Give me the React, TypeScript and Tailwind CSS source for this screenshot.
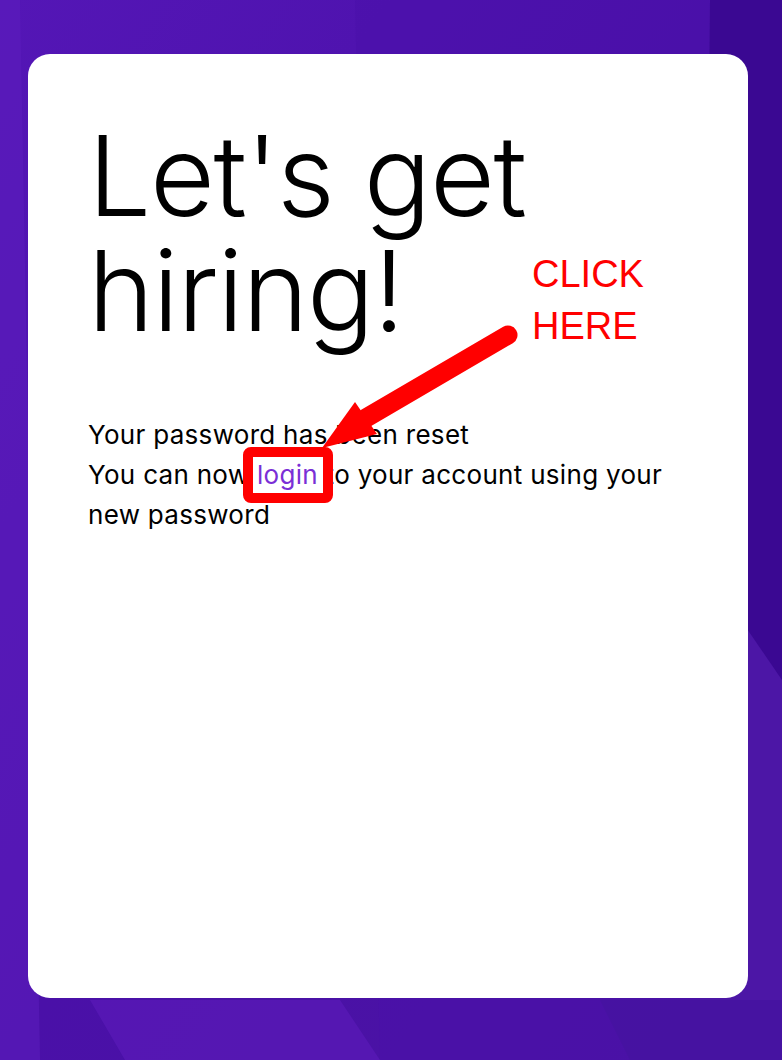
import React from "react";

export default function App() {
  return (
    <div className="relative w-[782px] h-[1060px] overflow-hidden bg-[#4c12a8]" style={{ fontFamily: "Inter, 'Noto Sans', sans-serif" }}>
      <svg className="absolute inset-0" width="782" height="1060" viewBox="0 0 782 1060">
        <defs>
          <linearGradient id="bg" x1="0" y1="0" x2="1" y2="1">
            <stop offset="0" stopColor="#5416b6" />
            <stop offset="0.5" stopColor="#4a10a8" />
            <stop offset="1" stopColor="#4a14a2" />
          </linearGradient>
        </defs>
        <rect width="782" height="1060" fill="url(#bg)" />
        <polygon points="0,0 20,0 40,1060 0,1060" fill="#5c1cbd" opacity="0.6" />
        <polygon points="355,0 710,0 700,1060 380,1060" fill="#4a10aa" opacity="0.5" />
        <polygon points="710,0 782,0 782,1060 700,1060" fill="#3a0892" />
        <polygon points="700,560 782,680 782,1060 700,1060" fill="#4c16a6" />
        <polygon points="90,1000 340,1000 380,1060 125,1060" fill="#5a1ab8" opacity="0.7" />
        <polygon points="600,1000 782,1000 782,1060 630,1060" fill="#4412a0" opacity="0.7" />
      </svg>
      <div className="relative pt-[54px] px-[28px]">
        <div className="h-[944px] w-[720px] rounded-[22px] bg-white pl-[60px] pr-[60px] pt-[64px]">
          <h1 className="text-[112px] leading-[115px] font-light text-black tracking-[-1.3px]" style={{ fontFamily: "Inter, sans-serif" }}>
            Let's get
            <br />
            hiring!
          </h1>
          <div className="mt-[67px] text-[26px] leading-[40px] tracking-[0.3px] text-black" style={{ fontFamily: "Inter, sans-serif" }}>
            <p>Your password has been reset</p>
            <p>
              You can now <a className="text-[#7a2fd6]">login</a> to your account using your new password
            </p>
          </div>
        </div>
      </div>
      <svg className="absolute inset-0 pointer-events-none" width="782" height="1060" viewBox="0 0 782 1060">
        <line x1="508" y1="335" x2="366" y2="418" stroke="#ff0000" strokeWidth="19" strokeLinecap="round" />
        <polygon points="355,402 377,434 322,448" fill="#ff0000" />
        <rect x="248" y="452" width="80" height="46" rx="3" fill="none" stroke="#ff0000" strokeWidth="10" />
      </svg>
      <div className="absolute left-[532px] top-[248px] text-[38px] leading-[52px] text-[#ff0000]" style={{ fontFamily: "'Liberation Sans', Arial, sans-serif" }}>
        CLICK
        <br />
        HERE
      </div>
    </div>
  );
}
